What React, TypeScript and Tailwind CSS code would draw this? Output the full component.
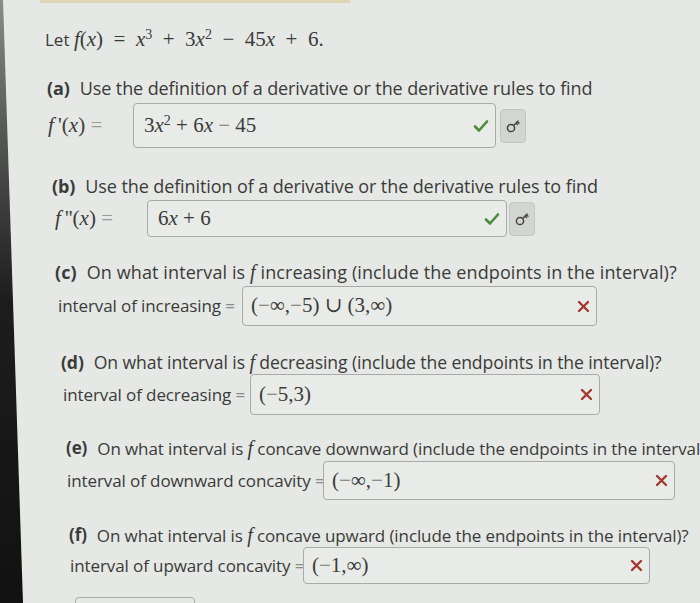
import type { ReactNode } from 'react';

const mathFont = "font-['Liberation_Serif','DejaVu_Serif',serif]";

function V({ children }: { children: ReactNode }) {
    return <span className="italic">{children}</span>;
}

function Check() {
    return (
        <svg width="16" height="14" viewBox="0 0 16 14" className="shrink-0">
            <path d="M2 7.5 L6 11.5 L14 2.5" fill="none" stroke="#4b8b3b" strokeWidth="2.6" strokeLinecap="round" strokeLinejoin="round" />
        </svg>
    );
}

function Cross() {
    return (
        <svg width="13" height="13" viewBox="0 0 13 13" className="shrink-0">
            <path d="M2 2 L11 11 M11 2 L2 11" stroke="#a3382f" strokeWidth="2.4" strokeLinecap="round" />
        </svg>
    );
}

function KeyButton() {
    return (
        <div className="flex h-[34px] w-[26px] shrink-0 items-center justify-center rounded-[4px] border border-[#c4c6c3] bg-[#d3d5d2]">
            <svg width="16" height="16" viewBox="0 0 16 16">
                <circle cx="6" cy="10" r="3.6" fill="none" stroke="#444" strokeWidth="1.5" />
                <path d="M8.6 7.4 L13 3 M11 5 L12.6 6.6 M12.4 3.6 L14 5.2" fill="none" stroke="#444" strokeWidth="1.4" strokeLinecap="round" />
            </svg>
        </div>
    );
}

export default function App() {
    return (
        <div className="relative h-[603px] w-[700px] overflow-hidden bg-[#e5e8e4] font-['Open_Sans','Noto_Sans',sans-serif] text-[#3a3b3a]">
            {/* photo edge */}
            <div className="absolute inset-y-0 left-0 w-[24px] bg-gradient-to-b from-[#8a8c8a] via-[#1c1d1c] to-[#101110] [clip-path:polygon(0_0,3px_0,23px_100%,0_100%)]" />
            <div className="absolute left-[40px] top-0 h-[3px] w-[310px] bg-[#ddd6b4]" />

            <div className="flex flex-col">
                {/* title */}
                <div className="ml-[45px] mt-[28px] flex h-[24px] items-center text-[17px]">
                    <span>Let&nbsp;</span>
                    <span className={`${mathFont} text-[21px]`}>
                        <V>f</V>(<V>x</V>)&nbsp; = &nbsp;<V>x</V>
                        <sup className="text-[14px]">3</sup>&nbsp; + &nbsp;3<V>x</V>
                        <sup className="text-[14px]">2</sup>&nbsp; − &nbsp;45<V>x</V>&nbsp; + &nbsp;6.
                    </span>
                </div>

                {/* (a) */}
                <div className="ml-[47px] mt-[26px] flex h-[20px] items-center text-[18px] tracking-[-0.1px]">
                    <span className="mr-[10px] font-bold">(a)</span>
                    <span>Use the definition of a derivative or the derivative rules to find</span>
                </div>
                <div className="ml-[48px] mt-[5px] flex h-[45px] items-center">
                    <span className={`${mathFont} w-[85px] whitespace-nowrap text-[21px]`}>
                        <V>f</V>&thinsp;'(<V>x</V>) <span className="text-[#9a9c99]">=</span>
                    </span>
                    <div className="flex h-full w-[363px] items-center justify-between rounded-[4px] border border-[#a9aba8] bg-[#e8ebe7] pl-[10px] pr-[6px]">
                        <span className={`${mathFont} text-[21px]`}>
                            3<V>x</V>
                            <sup className="text-[14px]">2</sup> + 6<V>x</V> <span className="text-[#777]">−</span> 45
                        </span>
                        <Check />
                    </div>
                    <div className="ml-[4px]">
                        <KeyButton />
                    </div>
                </div>

                {/* (b) */}
                <div className="ml-[52px] mt-[28px] flex h-[20px] items-center text-[18px] tracking-[-0.1px]">
                    <span className="mr-[10px] font-bold">(b)</span>
                    <span>Use the definition of a derivative or the derivative rules to find</span>
                </div>
                <div className="ml-[55px] mt-[4px] flex h-[37px] items-center">
                    <span className={`${mathFont} w-[92px] whitespace-nowrap text-[21px]`}>
                        <V>f</V>&thinsp;''(<V>x</V>) <span className="text-[#9a9c99]">=</span>
                    </span>
                    <div className="flex h-full w-[360px] items-center justify-between rounded-[4px] border border-[#a9aba8] bg-[#e8ebe7] pl-[10px] pr-[6px]">
                        <span className={`${mathFont} text-[21px]`}>
                            6<V>x</V> + 6
                        </span>
                        <Check />
                    </div>
                    <div className="ml-[2px]">
                        <KeyButton />
                    </div>
                </div>

                {/* (c) */}
                <div className="ml-[55px] mt-[25px] flex h-[20px] items-center whitespace-nowrap text-[18px] tracking-[0.1px]">
                    <span className="mr-[10px] font-bold">(c)</span>
                    <span>
                        On what interval is <span className={`${mathFont} italic text-[20px]`}>f</span> increasing (include the endpoints in the interval)?
                    </span>
                </div>
                <div className="ml-[58px] mt-[4px] flex h-[40px] items-center">
                    <span className="w-[184px] whitespace-nowrap text-[17px] tracking-[-0.1px]">
                        interval of increasing <span className="text-[#8a8c89]">=</span>
                    </span>
                    <div className="flex h-full w-[355px] items-center justify-between rounded-[4px] border border-[#a9aba8] bg-[#e8ebe7] pl-[8px] pr-[6px]">
                        <span className={`${mathFont} text-[21px]`}>
                            (<span className="text-[#777]">−</span>∞,<span className="text-[#777]">−</span>5) ∪ (3,∞)
                        </span>
                        <Cross />
                    </div>
                </div>

                {/* (d) */}
                <div className="ml-[61px] mt-[26px] flex h-[20px] items-center whitespace-nowrap text-[17.6px] tracking-[-0.1px]">
                    <span className="mr-[10px] font-bold">(d)</span>
                    <span>
                        On what interval is <span className={`${mathFont} italic text-[20px]`}>f</span> decreasing (include the endpoints in the interval)?
                    </span>
                </div>
                <div className="ml-[63px] mt-[2px] flex h-[41px] items-center">
                    <span className="w-[187px] whitespace-nowrap text-[17px] tracking-[-0.1px]">
                        interval of decreasing <span className="text-[#8a8c89]">=</span>
                    </span>
                    <div className="flex h-full w-[350px] items-center justify-between rounded-[4px] border border-[#a9aba8] bg-[#e8ebe7] pl-[8px] pr-[6px]">
                        <span className={`${mathFont} text-[21px]`}>
                            (<span className="text-[#777]">−</span>5,3)
                        </span>
                        <Cross />
                    </div>
                </div>

                {/* (e) */}
                <div className="ml-[66px] mt-[23px] flex h-[20px] items-center whitespace-nowrap text-[17px] tracking-[-0.1px]">
                    <span className="mr-[10px] font-bold">(e)</span>
                    <span>
                        On what interval is <span className={`${mathFont} italic text-[20px]`}>f</span> concave downward (include the endpoints in the interval)?
                    </span>
                </div>
                <div className="ml-[67px] mt-[3px] flex h-[39px] items-center">
                    <span className="w-[256px] whitespace-nowrap text-[17px] tracking-[-0.1px]">
                        interval of downward concavity <span className="text-[#8a8c89]">=</span>
                    </span>
                    <div className="flex h-full w-[352px] items-center justify-between rounded-[4px] border border-[#a9aba8] bg-[#e8ebe7] pl-[8px] pr-[6px]">
                        <span className={`${mathFont} text-[21px]`}>
                            (<span className="text-[#777]">−</span>∞,<span className="text-[#777]">−</span>1)
                        </span>
                        <Cross />
                    </div>
                </div>

                {/* (f) */}
                <div className="ml-[69px] mt-[25px] flex h-[20px] items-center whitespace-nowrap text-[17px] tracking-[-0.1px]">
                    <span className="mr-[10px] font-bold">(f)</span>
                    <span>
                        On what interval is <span className={`${mathFont} italic text-[20px]`}>f</span> concave upward (include the endpoints in the interval)?
                    </span>
                </div>
                <div className="ml-[70px] mt-[2px] flex h-[37px] items-center">
                    <span className="w-[233px] whitespace-nowrap text-[17px] tracking-[-0.1px]">
                        interval of upward concavity <span className="text-[#8a8c89]">=</span>
                    </span>
                    <div className="flex h-full w-[347px] items-center justify-between rounded-[4px] border border-[#a9aba8] bg-[#e8ebe7] pl-[8px] pr-[6px]">
                        <span className={`${mathFont} text-[21px]`}>
                            (<span className="text-[#777]">−</span>1,∞)
                        </span>
                        <Cross />
                    </div>
                </div>

                {/* next box, cut off */}
                <div className="ml-[75px] mt-[13px] h-[30px] w-[120px] rounded-[4px] border border-[#a9aba8]" />
            </div>
        </div>
    );
}
